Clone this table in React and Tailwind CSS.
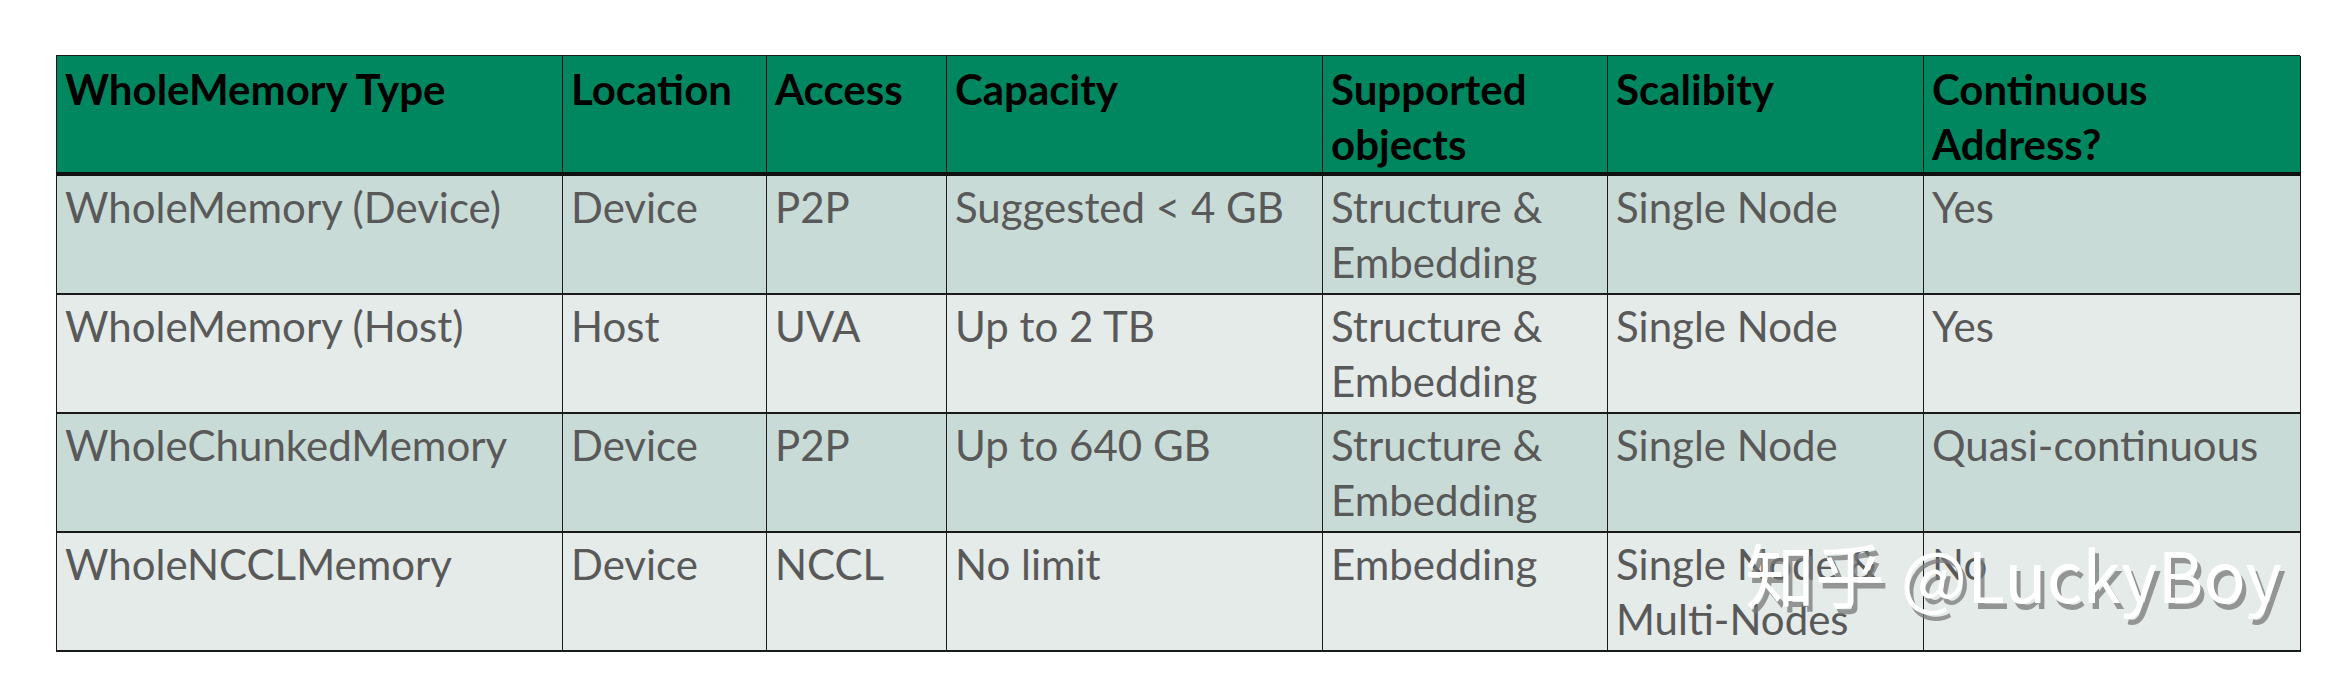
import React from "react";

// column widths taken from the slide (px)
const COLS = "grid-cols-[506px_204px_180px_376px_285px_316px_377px]";

const HEADERS = [
  "WholeMemory Type",
  "Location",
  "Access",
  "Capacity",
  "Supported objects",
  "Scalibity",
  "Continuous Address?",
];

const ROWS = [
  ["WholeMemory (Device)", "Device", "P2P", "Suggested < 4 GB", "Structure & Embedding", "Single Node", "Yes"],
  ["WholeMemory (Host)", "Host", "UVA", "Up to 2 TB", "Structure & Embedding", "Single Node", "Yes"],
  ["WholeChunkedMemory", "Device", "P2P", "Up to 640 GB", "Structure & Embedding", "Single Node", "Quasi-continuous"],
  ["WholeNCCLMemory", "Device", "NCCL", "No limit", "Embedding", "Single Node & Multi-Nodes", "No"],
];

const App = () => {
  return (
    <div
      className="relative w-[2350px] h-[690px] bg-white pt-[55px] pl-[56px]"
      style={{ fontFamily: "Lato, 'Open Sans', sans-serif" }}
    >
      <div className={`grid ${COLS} w-[2244px] border-l border-t border-[#1a1a1a]`}>
        {HEADERS.map((h) => (
          <div
            key={h}
            className="h-[120px] bg-[#00875f] border-r border-b-4 border-[#111] pl-[8px] pr-2 pt-[6px] text-[42px] leading-[55px] font-bold text-black"
          >
            {h}
          </div>
        ))}

        {ROWS.map((row, i) =>
          row.map((cell, j) => (
            <div
              key={`${i}-${j}`}
              className={`h-[119px] border-r border-b-2 border-[#1a1a1a] pl-[8px] pr-2 pt-[4px] text-[42px] leading-[55px] text-[#595959] ${
                i % 2 === 0 ? "bg-[#c9dbd6]" : "bg-[#e4ebe9]"
              }`}
            >
              {cell}
            </div>
          ))
        )}
      </div>

      {/* zhihu watermark */}
      <div
        className="absolute left-[1745px] top-[538px] text-[70px] leading-none text-white whitespace-nowrap [text-shadow:4px_6px_0_rgba(120,120,120,0.75)]"
        style={{ fontFamily: "'Noto Sans CJK SC', 'Noto Sans', sans-serif" }}
      >
        知乎 @LuckyBoy
      </div>
    </div>
  );
};

export default App;
